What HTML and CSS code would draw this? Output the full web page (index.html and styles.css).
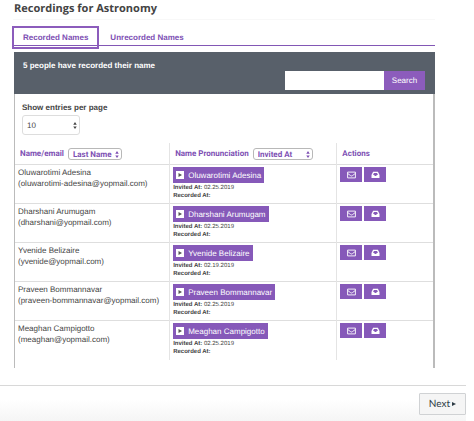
FILE: index.html
```html
<!DOCTYPE html>
<html lang="en">
<head>
<meta charset="utf-8">
<meta name="viewport" content="width=device-width, initial-scale=1">
<title>Recordings for Astronomy</title>
<link rel="stylesheet" href="styles.css">
</head>
<body>
<svg class="defs" aria-hidden="true">
  <symbol id="arrows" viewBox="0 0 4 8"><path d="M0 3 2 0l2 3zM0 5l2 3 2-3z" fill="currentColor"/></symbol>
  <symbol id="play" viewBox="0 0 8 8"><path fill="#fff" d="M0 0h8v8H0z"/><path fill="#555" d="M2.5 2v4L6 4z"/></symbol>
  <symbol id="mail" viewBox="0 0 9 8"><path d="M.6 1.1h7.8v5.8H.6zM.6 2.4l2.9 2.2q1 .8 2 0l2.9-2.2" fill="none" stroke="#fff" stroke-width=".9"/></symbol>
  <symbol id="inbox" viewBox="0 0 8 8"><path d="M1.6.8h4.8L8 4v3H0V4zM2.4 2 1.6 4h1.1l.6 1h1.4l.6-1h1.1l-.8-2z" fill="#fff" fill-rule="evenodd"/></symbol>
</svg>
<main class="page">
  <h1 class="title">Recordings for Astronomy</h1>
  <nav class="tabs">
    <a class="tab tab-active" href="#recorded">Recorded Names</a>
    <a class="tab" href="#unrecorded">Unrecorded Names</a>
  </nav>
  <section class="panel" id="recorded">
    <header class="panel-head">
      <p class="summary">5 people have recorded their name</p>
      <form class="search">
        <input class="search-input" type="text" aria-label="Search names">
        <button class="search-button" type="button">Search</button>
      </form>
    </header>
    <div class="entries">
      <label class="entries-label" for="entries">Show entries per page</label>
      <span class="select-wrap select-entries">
        <select id="entries"><option>10</option></select>
        <svg class="arrows"><use href="#arrows"/></svg>
      </span>
    </div>
    <table class="names">
      <colgroup><col class="col-name"><col class="col-audio"><col class="col-actions"></colgroup>
      <thead>
        <tr>
          <th scope="col"><div class="heading"><label for="sort-name">Name/email</label>
            <span class="select-wrap select-name"><select id="sort-name"><option>Last Name</option></select><svg class="arrows"><use href="#arrows"/></svg></span></div></th>
          <th scope="col"><div class="heading"><label for="sort-audio">Name Pronunciation</label>
            <span class="select-wrap select-audio"><select id="sort-audio"><option>Invited At</option></select><svg class="arrows"><use href="#arrows"/></svg></span></div></th>
          <th scope="col"><div class="heading">Actions</div></th>
        </tr>
      </thead>
      <tbody>
        <tr>
          <td>Oluwarotimi Adesina<br>(oluwarotimi-adesina@yopmail.com)</td>
          <td><button class="play" type="button"><svg><use href="#play"/></svg>Oluwarotimi Adesina</button><p class="dates"><b>Invited At:</b> 02.25.2019<br><b>Recorded At:</b></p></td>
          <td><div class="actions"><button type="button" aria-label="Email"><svg><use href="#mail"/></svg></button><button type="button" aria-label="Inbox"><svg><use href="#inbox"/></svg></button></div></td>
        </tr>
        <tr>
          <td>Dharshani Arumugam<br>(dharshani@yopmail.com)</td>
          <td><button class="play" type="button"><svg><use href="#play"/></svg>Dharshani Arumugam</button><p class="dates"><b>Invited At:</b> 02.25.2019<br><b>Recorded At:</b></p></td>
          <td><div class="actions"><button type="button" aria-label="Email"><svg><use href="#mail"/></svg></button><button type="button" aria-label="Inbox"><svg><use href="#inbox"/></svg></button></div></td>
        </tr>
        <tr>
          <td>Yvenide Belizaire<br>(yvenide@yopmail.com)</td>
          <td><button class="play" type="button"><svg><use href="#play"/></svg>Yvenide Belizaire</button><p class="dates"><b>Invited At:</b> 02.19.2019<br><b>Recorded At:</b></p></td>
          <td><div class="actions"><button type="button" aria-label="Email"><svg><use href="#mail"/></svg></button><button type="button" aria-label="Inbox"><svg><use href="#inbox"/></svg></button></div></td>
        </tr>
        <tr>
          <td>Praveen Bommannavar<br>(praveen-bommannavar@yopmail.com)</td>
          <td><button class="play" type="button"><svg><use href="#play"/></svg>Praveen Bommannavar</button><p class="dates"><b>Invited At:</b> 02.25.2019<br><b>Recorded At:</b></p></td>
          <td><div class="actions"><button type="button" aria-label="Email"><svg><use href="#mail"/></svg></button><button type="button" aria-label="Inbox"><svg><use href="#inbox"/></svg></button></div></td>
        </tr>
        <tr>
          <td>Meaghan Campigotto<br>(meaghan@yopmail.com)</td>
          <td><button class="play" type="button"><svg><use href="#play"/></svg>Meaghan Campigotto</button><p class="dates"><b>Invited At:</b> 02.25.2019<br><b>Recorded At:</b></p></td>
          <td><div class="actions"><button type="button" aria-label="Email"><svg><use href="#mail"/></svg></button><button type="button" aria-label="Inbox"><svg><use href="#inbox"/></svg></button></div></td>
        </tr>
      </tbody>
    </table>
  </section>
</main>
<footer class="footer">
  <button class="next" type="button">Next <svg viewBox="0 0 4 4"><path d="M0 0v4l4-2z" fill="#2d3b45"/></svg></button>
</footer>
</body>
</html>
```
FILE: styles.css
```css
* { box-sizing: border-box; }
body {
  margin: 0;
  background: #fff;
  color: #444;
  font: 8px/11px "Liberation Sans", Arial, sans-serif;
  text-rendering: geometricPrecision;
}
button, select, input { font: inherit; color: inherit; margin: 0; text-rendering: inherit; }
svg { display: block; }
.defs { display: none; }
.page { padding: 0 39px 0 13px; }
.title {
  margin: 0;
  padding: 1px 1px 2px;
  border-bottom: 1px solid #f8f8f8;
  font: bold 11px/16px "Open Sans", sans-serif;
}
.tabs {
  display: flex;
  align-items: flex-start;
  height: 20px;
  margin-top: 6px;
  border-bottom: 1px solid #8257b5;
}
.tab {
  padding: 4px 9px;
  border: 2px solid transparent;
  border-bottom: 0;
  color: #7d4fb3;
  font-weight: bold;
  text-decoration: none;
}
.tab-active {
  padding: 4px 9px;
  border: 2px solid #8c5cbc;
  margin-left: -1px;
}
.panel {
  margin: 6px 0 0 1px;
  padding-bottom: 8px;
  border: solid #bbb;
  border-width: 0 2px 0 1px;
}
.panel-head {
  margin: 0 -2px 0 -1px;
  padding: 8px 10px 4px 9px;
  background: #58606a;
  color: #fff;
}
.summary { margin: 0; font-weight: bold; }
.search { display: flex; justify-content: flex-end; }
.search-input {
  width: 99px;
  height: 19px;
  padding: 0 5px;
  border: 0;
  background: #fff;
  color: #444;
}
.search-button {
  width: 41px;
  height: 19px;
  padding: 0;
  border: 0;
  background: #8c5cbc;
}
.entries { padding: 8px 7px 0; }
.entries-label { display: block; margin-bottom: 2px; font-weight: bold; }
.select-wrap { position: relative; display: inline-flex; }
.select-wrap select {
  width: 100%;
  height: 12px;
  padding: 0 4px;
  border: 1px solid #b8b8b8;
  border-radius: 3px;
  background: #fff;
  appearance: none;
}
.arrows {
  position: absolute;
  top: 3px;
  right: 3px;
  width: 4px;
  height: 7px;
  pointer-events: none;
}
.select-entries { width: 58px; }
.select-entries select { height: 20px; border-color: #ddd; }
.select-entries .arrows { top: 7px; }
.select-name { width: 54px; }
.select-audio { width: 60px; }
.names {
  width: 100%;
  border-collapse: collapse;
  table-layout: fixed;
  margin-top: 8px;
}
.col-name { width: 37%; }
.col-audio { width: 40%; }
.col-actions { width: 23%; }
th, td {
  padding: 0 3px;
  text-align: left;
  vertical-align: top;
}
th + th, td + td { border-left: 1px solid #e4e4e4; }
th { color: #7d4fb3; font-family: Roboto, sans-serif; }
.heading {
  display: flex;
  align-items: center;
  gap: 4px;
  height: 21px;
  padding: 0 2px;
}
td { height: 39px; padding-top: 2px; border-top: 1px solid #dedede; }
.play {
  display: flex;
  align-items: center;
  gap: 4px;
  height: 16px;
  padding: 0 3px;
  border: 0;
  background: #8659b9;
  color: #fff;
}
.play svg { width: 8px; height: 8px; }
.dates { margin: 1px 0 0; font-size: 6px; line-height: 8px; }
.actions { display: flex; gap: 2px; }
.actions button {
  display: grid;
  place-items: center;
  width: 22px;
  height: 15px;
  padding: 0;
  border: 0;
  background: #8659b9;
}
.actions svg { width: 9px; height: 8px; }
.footer {
  display: flex;
  justify-content: flex-end;
  margin: 17px 8px 0 0;
  padding: 7px 0 6px;
  border-top: 1px solid #d8d8d8;
  background: linear-gradient(#fff 40%, #f5f5f5);
}
.next {
  display: flex;
  align-items: center;
  justify-content: center;
  gap: 2px;
  width: 47px;
  height: 22px;
  padding: 0;
  border: 1px solid #d0d2d4;
  border-radius: 1px;
  background: #f5f5f5;
  color: #2d3b45;
  font: 10px/12px Lato, sans-serif;
}
.next svg { width: 4px; height: 4px; }
```
